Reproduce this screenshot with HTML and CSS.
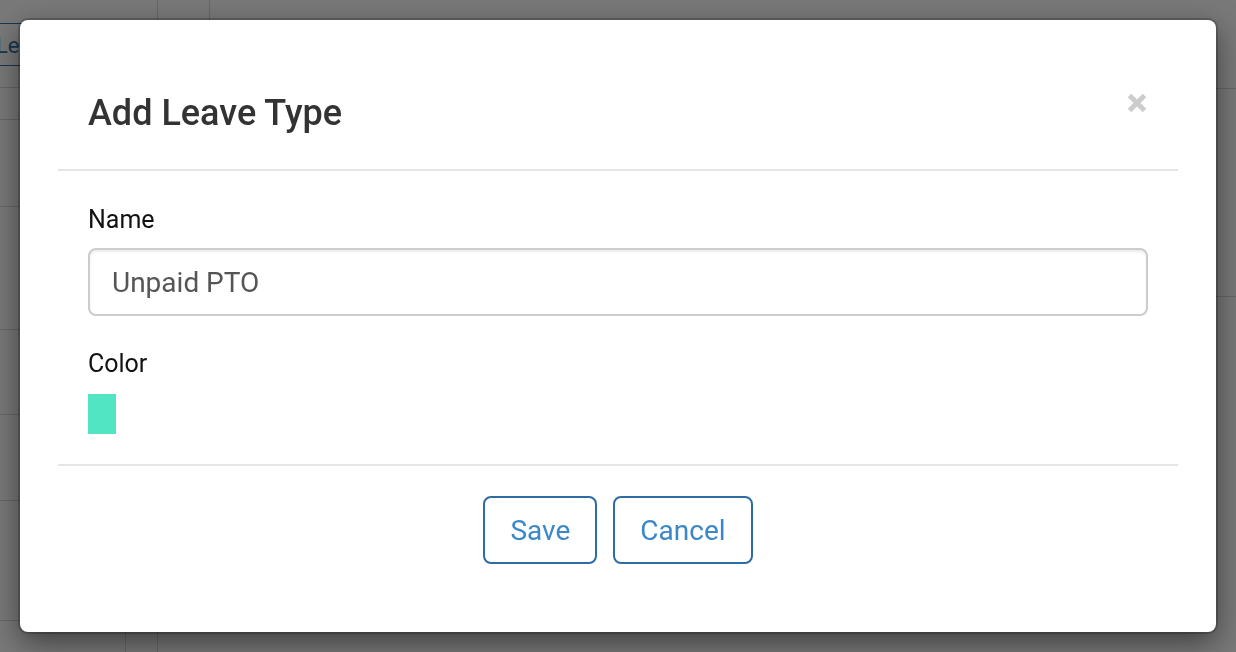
FILE: index.html
```html
<!DOCTYPE html>
<html>
    <head>
        <title>Add Leave Type</title>
        <link rel="stylesheet" href="styles.css">
    </head>
    <body>

        <div class="page">
            <div class="col-left">
                <div class="cells cells-top">
                    <span class="cell cell-a"></span>
                    <span class="cell cell-b"></span>
                </div>
                <div class="tab">Le</div>
                <div class="row row-1"></div>
                <div class="row row-2"></div>
                <div class="row row-3"></div>
                <div class="row row-4"></div>
                <div class="row row-5"></div>
                <div class="row row-6"></div>
                <div class="row row-7"></div>
                <div class="cells cells-bottom">
                    <span class="cell cell-c"></span>
                    <span class="cell cell-d"></span>
                </div>
            </div>
            <div class="col-right">
                <div class="cells cells-top">
                    <span class="cell cell-e"></span>
                    <span class="cell"></span>
                </div>
                <div class="row row-r1"></div>
                <div class="row row-r2"></div>
            </div>
        </div>

        <div class="backdrop"></div>

        <div class="modal">
            <div class="modal-header">
                <h4 class="modal-title">Add Leave Type</h4>
                <button class="close">
                    <svg width="20" height="20" viewBox="0 0 20 20">
                        <path d="M2.5 2.5 L17.5 17.5 M17.5 2.5 L2.5 17.5" stroke="#cccccc" stroke-width="5"/>
                    </svg>
                </button>
            </div>

            <div class="modal-body">
                <label class="label">Name</label>
                <input class="input" type="text" value="Unpaid PTO">

                <label class="label">Color</label>
                <div class="swatch"></div>
            </div>

            <div class="modal-footer">
                <button class="btn">Save</button>
                <button class="btn">Cancel</button>
            </div>
        </div>

    </body>
</html>
```

FILE: styles.css
```css
body {
    margin: 0;
    height: 652px;
    overflow: hidden;
    background-color: #f2f2f2;
    font-family: Roboto, "Liberation Sans", sans-serif;
}

/* page under the backdrop */

.page {
    display: flex;
    height: 652px;
}

.col-left {
    width: 157px;
    display: flex;
    flex-direction: column;
}

.col-right {
    flex: 1;
    display: flex;
    flex-direction: column;
    border-left: 1px solid #cfcfcf;
}

.cells {
    display: flex;
}

.cells-top {
    height: 20px;
}

.cells-bottom {
    flex: 1;
}

.cell {
    flex: 1;
}

.cell-a {
    flex: none;
    width: 157px;
}

.cell-c {
    flex: none;
    width: 125px;
    border-right: 1px solid #cfcfcf;
}

.cell-e {
    flex: none;
    width: 51px;
    border-right: 1px solid #cfcfcf;
}

.tab {
    margin-top: 3px;
    height: 41px;
    margin-left: -4px;
    border-top: 1px solid #2e6da4;
    border-bottom: 1px solid #2e6da4;
    color: #2e6da4;
    font-size: 22px;
    line-height: 44px;
}

.row {
    border-bottom: 1px solid #cfcfcf;
}

.row-1 { height: 21px; }
.row-2 { height: 31px; }
.row-3 { height: 86px; }
.row-4 { height: 122px; }
.row-5 { height: 84px; }
.row-6 { height: 85px; }
.row-7 { height: 119px; }

.row-r1 { height: 68px; }
.row-r2 { height: 207px; }

.backdrop {
    position: fixed;
    inset: 0;
    background-color: rgba(0, 0, 0, 0.5);
}

/* modal */

.modal {
    position: absolute;
    top: 20px;
    left: 20px;
    right: 20px;
    padding: 38px;
    background-color: white;
    border-radius: 8px;
    box-shadow: 0 0 0 2px rgba(0, 0, 0, 0.2), 0 10px 30px rgba(0, 0, 0, 0.5);
}

.modal-header {
    display: flex;
    justify-content: space-between;
    align-items: flex-start;
    padding: 30px;
    border-bottom: 2px solid #e5e5e5;
}

.modal-title {
    margin: 0;
    font-size: 36px;
    font-weight: 500;
    line-height: 51px;
    color: #333333;
}

.close {
    margin-top: 5px;
    margin-right: 1px;
    padding: 0;
    border: none;
    background: transparent;
    line-height: 0;
    cursor: pointer;
}

.modal-body {
    padding: 30px;
}

.label {
    display: block;
    margin-bottom: 10px;
    font-size: 25px;
    line-height: 37px;
    color: #111111;
}

.input {
    display: block;
    box-sizing: border-box;
    width: 100%;
    height: 68px;
    margin: 0 0 29px 0;
    padding: 0 22px;
    border: 2px solid #cccccc;
    border-radius: 8px;
    box-shadow: inset 0 2px 2px rgba(0, 0, 0, 0.075);
    font-family: Roboto, "Liberation Sans", sans-serif;
    font-size: 28px;
    color: #555555;
    outline: none;
}

.swatch {
    width: 28px;
    height: 40px;
    margin-top: 12px;
    background-color: #52e5c3;
}

.modal-footer {
    display: flex;
    justify-content: center;
    gap: 16px;
    padding: 30px;
    border-top: 2px solid #e5e5e5;
}

.btn {
    height: 68px;
    padding: 0 25px;
    border: 2px solid #2e6da4;
    border-radius: 8px;
    background-color: white;
    color: #3a87c9;
    font-family: Roboto, "Liberation Sans", sans-serif;
    font-size: 28px;
    cursor: pointer;
}
```
